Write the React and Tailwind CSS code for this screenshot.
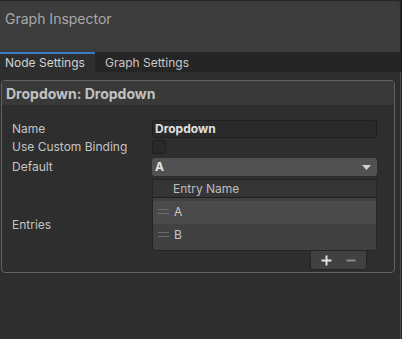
import React from 'react';

const labelCls = "w-[140px] shrink-0 text-[12px] text-[#c4c4c4] leading-[14px]";

const Row = ({ label, children, className = '' }) => (
  <div className={`flex items-center ${className}`}>
    <div className={labelCls}>{label}</div>
    <div className="flex-1">{children}</div>
  </div>
);

const Handle = () => (
  <div className="w-[11px] flex flex-col gap-[3px] mr-[5px]">
    <div className="h-px bg-[#6b6b6b]" />
    <div className="h-px bg-[#6b6b6b]" />
  </div>
);

export default function App() {
  const entries = ['A', 'B'];
  return (
    <div className="w-[402px] h-[339px] flex bg-[#2e2e2e] overflow-hidden font-['Inter',_'Noto_Sans',_sans-serif]">
      <div className="w-[400px] flex flex-col">
        {/* title bar */}
        <div className="h-[52px] bg-[#3c3c3c] border-t border-[#262626] rounded-tr-[4px] px-[5px] pt-[9px] text-[14px] leading-[18px] text-[#a9a9a9]">
          Graph Inspector
        </div>

        {/* tabs */}
        <div className="h-[20px] bg-[#252525] flex text-[12px] leading-[16px]">
          <div className="w-[95px] bg-[#2e2e2e] border-t-2 border-[#3b7bc2] pl-[5px] pt-[1px] text-[#d2d2d2]">
            Node Settings
          </div>
          <div className="pl-[10px] pt-[3px] text-[#c8c8c8]">Graph Settings</div>
        </div>

        {/* body */}
        <div className="flex-1 pl-px pt-[8px] pr-[5px]">
          <div className="w-[394px] border border-[#626262] rounded-[4px] pb-[2px]">
            <div className="h-[24px] bg-[#393939] rounded-t-[3px] px-[4px] flex items-center text-[14px] font-bold text-[#c2c2c2]">
              Dropdown: Dropdown
            </div>

            <div className="pl-[10px] pr-[17px] pt-[15px] flex flex-col">
              <Row label="Name">
                <div className="h-[18px] bg-[#2a2a2a] border border-[#1f1f1f] rounded-[3px] px-[2px] flex items-center text-[12px] font-bold text-[#e0e0e0]">
                  Dropdown
                </div>
              </Row>

              <Row label="Use Custom Binding" className="mt-[2px]">
                <div className="w-[14px] h-[14px] bg-[#2a2a2a] border border-[#1f1f1f] rounded-[2px]" />
              </Row>

              <Row label="Default" className="mt-[4px]">
                <div className="h-[18px] bg-[#515151] rounded-[3px] pl-[3px] pr-[6px] flex items-center justify-between text-[12px] font-bold text-[#e6e6e6]">
                  <span>A</span>
                  <svg width="9" height="5" viewBox="0 0 9 5">
                    <path d="M0 0 H9 L4.5 5 Z" fill="#d0d0d0" />
                  </svg>
                </div>
              </Row>

              <Row label="Entries" className="mt-[3px]">
                <div className="flex flex-col">
                  <div className="bg-[#414141] border border-[#242424] rounded-[3px] overflow-hidden">
                    <div className="h-[18px] bg-[#353535] border-b border-[#1e1e1e] pl-[20px] flex items-center text-[12px] text-[#bdbdbd]">
                      Entry Name
                    </div>
                    <div className="pt-[3px] pb-[3px]">
                      {entries.map((e, i) => (
                        <div
                          key={e}
                          className={`h-[23px] flex items-center pl-[5px] pb-[2px] text-[12px] text-[#c8c8c8] ${i === 0 ? 'bg-[#4a4a4a]' : ''}`}
                        >
                          <Handle />
                          {e}
                        </div>
                      ))}
                    </div>
                  </div>
                  <div className="self-end mr-[10px] w-[57px] h-[19px] bg-[#414141] border-x border-b border-[#242424] rounded-b-[3px] flex items-center justify-center gap-[14px]">
                    <svg width="11" height="11" viewBox="0 0 11 11">
                      <path d="M5.5 0.5 V10.5 M0.5 5.5 H10.5" stroke="#e2e2e2" strokeWidth="2" />
                    </svg>
                    <svg width="10" height="11" viewBox="0 0 10 11">
                      <path d="M0.5 5.5 H9.5" stroke="#8a8a8a" strokeWidth="2" />
                    </svg>
                  </div>
                </div>
              </Row>
            </div>
          </div>
        </div>
      </div>
      <div className="w-[2px] flex flex-col">
        <div className="h-[72px] bg-[#1f1f1f]" />
        <div className="flex-1 border-l border-[#4a4a4a] bg-[#262626]" />
      </div>
    </div>
  );
}
